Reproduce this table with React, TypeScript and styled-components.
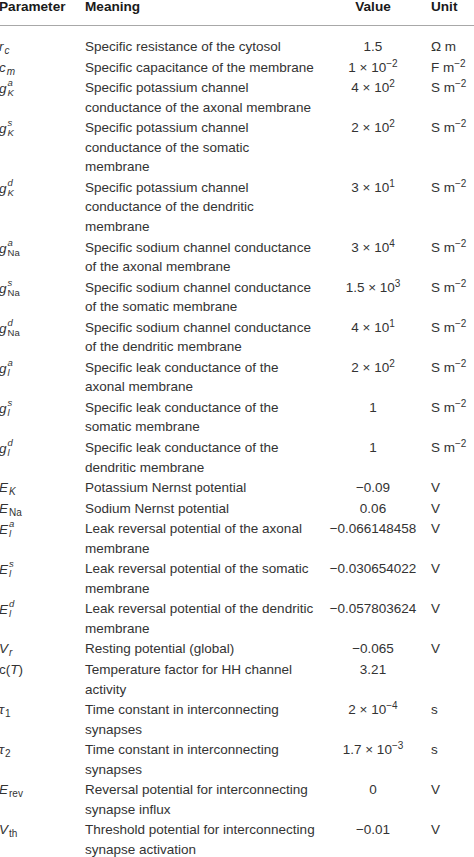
import React from "react";
import styled, { createGlobalStyle } from "styled-components";

const GlobalStyle = createGlobalStyle`
  html, body {
    margin: 0;
    padding: 0;
    background: #ffffff;
    overflow: hidden;
  }
  body {
    font-family: "Liberation Sans", Arial, sans-serif;
    color: #333333;
  }
`;

const Table = styled.div`
  display: grid;
  grid-template-columns: 86px 240px 96px 60px;
  margin: -3px 0 0 -1px;
  width: 482px;
  font-size: 13.5px;
  line-height: 19.55px;
`;

const HeadCell = styled.div<{ $center?: boolean; $pad?: number }>`
  font-weight: bold;
  font-size: 13.6px;
  color: #1a1a1a;
  padding: 0 0 8px ${(p) => p.$pad ?? 0}px;
  border-bottom: 1px solid #a8a8a8;
  margin-bottom: 11px;
  text-align: ${(p) => (p.$center ? "center" : "left")};
`;

const Cell = styled.div<{ $center?: boolean; $pad?: number }>`
  padding: 0.5px 0 0.5px ${(p) => p.$pad ?? 0}px;
  text-align: ${(p) => (p.$center ? "center" : "left")};
  white-space: nowrap;
`;

const Line = styled.span`
  display: block;
`;

const Ital = styled.i`
  font-style: italic;
`;

const Stack = styled.span`
  display: inline-block;
  font-size: 9.5px;
  line-height: 10px;
  vertical-align: -3px;
  margin-left: 1px;
`;

const StackLine = styled.span<{ $italic?: boolean }>`
  display: block;
  font-style: ${(p) => (p.$italic ? "italic" : "normal")};
`;

const Sub = styled.span<{ $italic?: boolean }>`
  font-size: 10px;
  line-height: 0;
  vertical-align: -3px;
  margin-left: 1px;
  font-style: ${(p) => (p.$italic ? "italic" : "normal")};
`;

const Sup = styled.span`
  font-size: 10px;
  line-height: 0;
  vertical-align: 5px;
`;

type SymProps = {
  base: string;
  baseItalic?: boolean;
  sub?: string;
  subItalic?: boolean;
  sup?: string;
};

function Sym({ base, baseItalic = true, sub, subItalic = true, sup }: SymProps) {
  const b = baseItalic ? <Ital>{base}</Ital> : <span>{base}</span>;
  if (sup) {
    return (
      <>
        {b}
        <Stack>
          <StackLine $italic>{sup}</StackLine>
          <StackLine $italic={subItalic}>{sub}</StackLine>
        </Stack>
      </>
    );
  }
  return (
    <>
      {b}
      {sub && <Sub $italic={subItalic}>{sub}</Sub>}
    </>
  );
}

function Sci({ m, e }: { m: string; e: string }) {
  return (
    <>
      {m} × 10<Sup>{e}</Sup>
    </>
  );
}

function Unit({ u, e }: { u: string; e?: string }) {
  return (
    <>
      {u}
      {e && <Sup>{e}</Sup>}
    </>
  );
}

type Row = {
  p: React.ReactNode;
  m: string[];
  v: React.ReactNode;
  u: React.ReactNode;
};

const sm2 = <Unit u="S m" e="−2" />;

const rows: Row[] = [
  { p: <Sym base="r" sub="c" />, m: ["Specific resistance of the cytosol"], v: "1.5", u: "Ω m" },
  { p: <Sym base="c" sub="m" />, m: ["Specific capacitance of the membrane"], v: <Sci m="1" e="−2" />, u: <Unit u="F m" e="−2" /> },
  { p: <Sym base="g" sub="K" sup="a" />, m: ["Specific potassium channel", "conductance of the axonal membrane"], v: <Sci m="4" e="2" />, u: sm2 },
  { p: <Sym base="g" sub="K" sup="s" />, m: ["Specific potassium channel", "conductance of the somatic", "membrane"], v: <Sci m="2" e="2" />, u: sm2 },
  { p: <Sym base="g" sub="K" sup="d" />, m: ["Specific potassium channel", "conductance of the dendritic", "membrane"], v: <Sci m="3" e="1" />, u: sm2 },
  { p: <Sym base="g" sub="Na" subItalic={false} sup="a" />, m: ["Specific sodium channel conductance", "of the axonal membrane"], v: <Sci m="3" e="4" />, u: sm2 },
  { p: <Sym base="g" sub="Na" subItalic={false} sup="s" />, m: ["Specific sodium channel conductance", "of the somatic membrane"], v: <Sci m="1.5" e="3" />, u: sm2 },
  { p: <Sym base="g" sub="Na" subItalic={false} sup="d" />, m: ["Specific sodium channel conductance", "of the dendritic membrane"], v: <Sci m="4" e="1" />, u: sm2 },
  { p: <Sym base="g" sub="l" sup="a" />, m: ["Specific leak conductance of the", "axonal membrane"], v: <Sci m="2" e="2" />, u: sm2 },
  { p: <Sym base="g" sub="l" sup="s" />, m: ["Specific leak conductance of the", "somatic membrane"], v: "1", u: sm2 },
  { p: <Sym base="g" sub="l" sup="d" />, m: ["Specific leak conductance of the", "dendritic membrane"], v: "1", u: sm2 },
  { p: <Sym base="E" sub="K" />, m: ["Potassium Nernst potential"], v: "−0.09", u: "V" },
  { p: <Sym base="E" sub="Na" subItalic={false} />, m: ["Sodium Nernst potential"], v: "0.06", u: "V" },
  { p: <Sym base="E" sub="l" sup="a" />, m: ["Leak reversal potential of the axonal", "membrane"], v: "−0.066148458", u: "V" },
  { p: <Sym base="E" sub="l" sup="s" />, m: ["Leak reversal potential of the somatic", "membrane"], v: "−0.030654022", u: "V" },
  { p: <Sym base="E" sub="l" sup="d" />, m: ["Leak reversal potential of the dendritic", "membrane"], v: "−0.057803624", u: "V" },
  { p: <Sym base="V" sub="r" />, m: ["Resting potential (global)"], v: "−0.065", u: "V" },
  {
    p: (
      <>
        c(<Ital>T</Ital>)
      </>
    ),
    m: ["Temperature factor for HH channel", "activity"],
    v: "3.21",
    u: "",
  },
  { p: <Sym base="τ" sub="1" subItalic={false} />, m: ["Time constant in interconnecting", "synapses"], v: <Sci m="2" e="−4" />, u: "s" },
  { p: <Sym base="τ" sub="2" subItalic={false} />, m: ["Time constant in interconnecting", "synapses"], v: <Sci m="1.7" e="−3" />, u: "s" },
  { p: <Sym base="E" sub="rev" subItalic={false} />, m: ["Reversal potential for interconnecting", "synapse influx"], v: "0", u: "V" },
  { p: <Sym base="V" sub="th" subItalic={false} />, m: ["Threshold potential for interconnecting", "synapse activation"], v: "−0.01", u: "V" },
];

export default function App() {
  return (
    <>
      <GlobalStyle />
      <Table>
        <HeadCell>Parameter</HeadCell>
        <HeadCell>Meaning</HeadCell>
        <HeadCell $center>Value</HeadCell>
        <HeadCell $pad={10}>Unit</HeadCell>
        {rows.map((r, i) => (
          <React.Fragment key={i}>
            <Cell>{r.p}</Cell>
            <Cell>
              {r.m.map((l) => (
                <Line key={l}>{l}</Line>
              ))}
            </Cell>
            <Cell $center>{r.v}</Cell>
            <Cell $pad={10}>{r.u}</Cell>
          </React.Fragment>
        ))}
      </Table>
    </>
  );
}
